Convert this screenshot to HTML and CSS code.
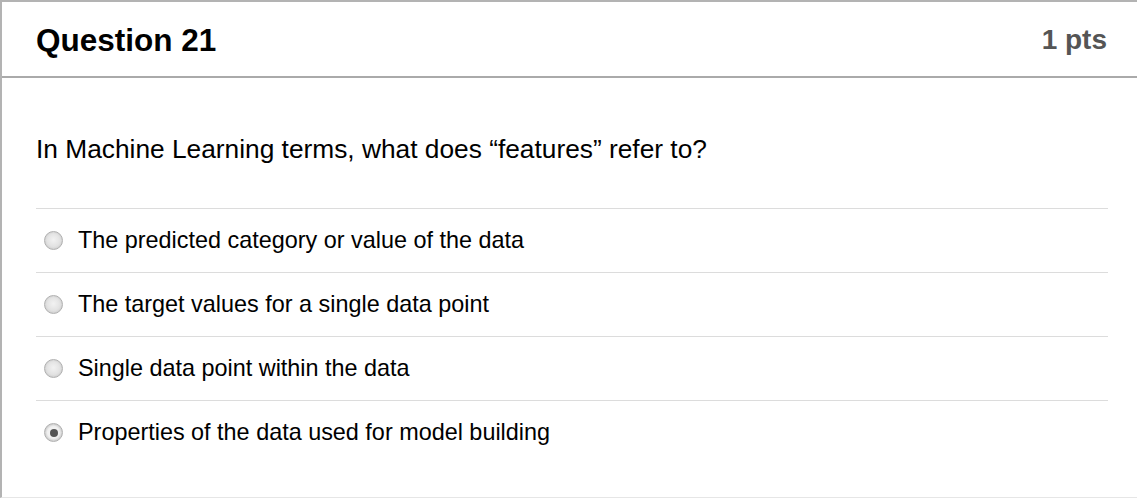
FILE: index.html
```html
<!DOCTYPE html>
<html>
<head>
<meta charset="utf-8">
<link rel="stylesheet" href="styles.css">
</head>
<body>
<div class="question">
  <div class="q-header">
    <h2 class="q-title">Question 21</h2>
    <span class="q-points">1 pts</span>
  </div>
  <div class="q-body">
    <p class="q-text">In Machine Learning terms, what does “features” refer to?</p>
    <ul class="answers">
      <li class="answer"><span class="radio"></span><span class="label">The predicted category or value of the data</span></li>
      <li class="answer"><span class="radio"></span><span class="label">The target values for a single data point</span></li>
      <li class="answer"><span class="radio"></span><span class="label">Single data point within the data</span></li>
      <li class="answer"><span class="radio checked"></span><span class="label">Properties of the data used for model building</span></li>
    </ul>
  </div>
</div>
</body>
</html>
```
FILE: styles.css
```css
html, body {
  margin: 0;
  padding: 0;
  background: #fff;
}
body {
  font-family: "Liberation Sans", Arial, sans-serif;
  color: #000;
}
.question {
  width: 1137px;
  height: 498px;
  box-sizing: border-box;
  border-top: 2px solid #b3b3b3;
  border-left: 2px solid #b3b3b3;
  border-bottom: 1px solid #e6e6e6;
  overflow: hidden;
}
.q-header {
  height: 76px;
  box-sizing: border-box;
  border-bottom: 2px solid #aaaaaa;
  display: flex;
  align-items: center;
  justify-content: space-between;
  padding: 2px 30px 0 34px;
}
.q-title {
  margin: 0;
  font-size: 31.5px;
  font-weight: bold;
  color: #000;
}
.q-points {
  font-size: 28px;
  font-weight: bold;
  color: #555;
}
.q-body {
  padding: 0 29px 0 34px;
}
.q-text {
  margin: 0;
  padding-top: 56px;
  font-size: 26.3px;
  line-height: 30px;
  height: 74px;
}
.answers {
  list-style: none;
  margin: 0;
  padding: 0;
}
.answer {
  height: 63px;
  border-top: 1px solid #dcdcdc;
  display: flex;
  align-items: center;
  font-size: 23.4px;
}
.radio {
  width: 19px;
  height: 19px;
  border-radius: 50%;
  box-sizing: border-box;
  border: 1px solid #b0b0b0;
  box-shadow: inset 0 0 2px #c8c8c8;
  background: radial-gradient(circle at 50% 45%, #f2f2f2 0%, #e2e2e2 55%, #cdcdcd 100%);
  margin-left: 8px;
  margin-right: 15px;
  display: flex;
  align-items: center;
  justify-content: center;
  flex: none;
}
.radio.checked {
  background: radial-gradient(circle, #f6f6f6 0%, #f0f0f0 50%, #cfcfcf 75%, #c4c4c4 100%);
}
.radio.checked::after {
  content: "";
  width: 8px;
  height: 8px;
  border-radius: 50%;
  background: #555;
}
.label {
  line-height: 1;
}
```
